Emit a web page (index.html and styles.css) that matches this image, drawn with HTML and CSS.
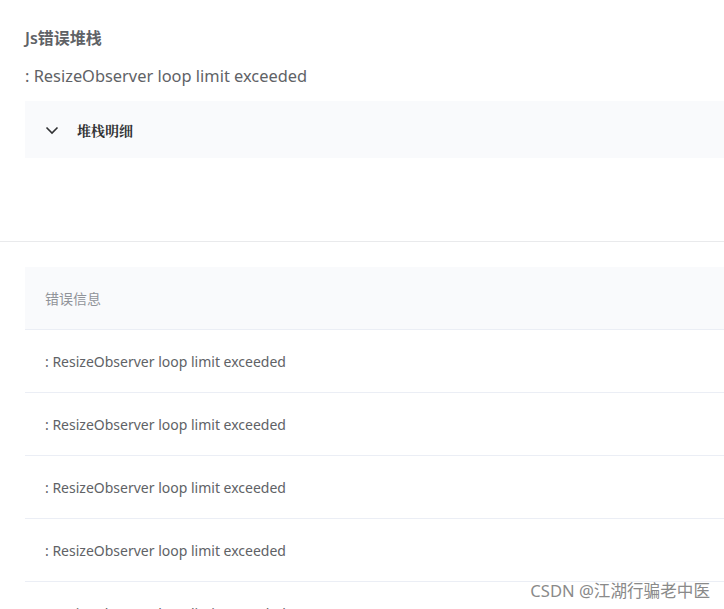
FILE: index.html
```html
<!DOCTYPE html>
<html>
<head>
<meta charset="utf-8">
<link rel="stylesheet" href="styles.css">
</head>
<body>
<div class="page">
  <section class="stack">
    <h3 class="title">Js错误堆栈</h3>
    <p class="message">: ResizeObserver loop limit exceeded</p>
    <div class="collapse">
      <svg class="chev" width="14" height="14" viewBox="0 0 14 14"><path d="M1.5 4.5 L7 10 L12.5 4.5" fill="none" stroke="#303133" stroke-width="1.6"/></svg>
      <span class="collapse-title">堆栈明细</span>
    </div>
  </section>
  <hr class="divider">
  <section class="table">
    <div class="thead">错误信息</div>
    <div class="row">: ResizeObserver loop limit exceeded</div>
    <div class="row">: ResizeObserver loop limit exceeded</div>
    <div class="row">: ResizeObserver loop limit exceeded</div>
    <div class="row">: ResizeObserver loop limit exceeded</div>
    <div class="row">: ResizeObserver loop limit exceeded</div>
  </section>
  <div class="watermark">CSDN @江湖行骗老中医</div>
</div>
</body>
</html>
```
FILE: styles.css
```css
html, body {
  margin: 0;
  padding: 0;
  background: #fff;
  overflow: hidden;
}
.page {
  width: 724px;
  height: 609px;
  overflow: hidden;
  position: relative;
  font-family: "Noto Sans", "Noto Sans CJK SC", sans-serif;
}
.stack {
  padding: 27px 0 0 25px;
  height: 187px;
}
.title {
  margin: 0;
  font-size: 16px;
  font-weight: 600;
  color: #606266;
  line-height: 22px;
}
.message {
  margin: 16px 0 0;
  font-size: 16.4px;
  color: #606266;
  line-height: 22px;
}
.collapse {
  margin-top: 14px;
  height: 57px;
  background: #f9fafc;
  display: flex;
  align-items: center;
  padding-left: 20px;
  gap: 18px;
}
.chev { display: block; }
.collapse-title {
  font-family: "Noto Serif CJK SC", "Noto Sans CJK SC", serif;
  font-size: 14px;
  font-weight: 700;
  color: #303133;
}
.divider {
  margin: 27px 0 0;
  border: 0;
  border-top: 1px solid #e9eaec;
  height: 0;
}
.table {
  margin: 25px 0 0 25px;
}
.thead {
  background: #f9fafc;
  border-bottom: 1px solid #ebeef5;
  display: flex;
  align-items: center;
  padding-left: 20px;
  font-size: 14px;
  color: #909399;
  box-sizing: border-box;
  height: 63px;
}
.row {
  height: 63px;
  border-bottom: 1px solid #ebeef5;
  box-sizing: border-box;
  display: flex;
  align-items: center;
  padding-left: 20px;
  font-size: 14px;
  color: #606266;
}
.watermark {
  position: absolute;
  right: 14px;
  top: 580px;
  font-size: 16.6px;
  color: #8a8a8a;
  line-height: 22px;
  font-family: "Noto Sans", "Noto Sans CJK SC", sans-serif;
}
```
